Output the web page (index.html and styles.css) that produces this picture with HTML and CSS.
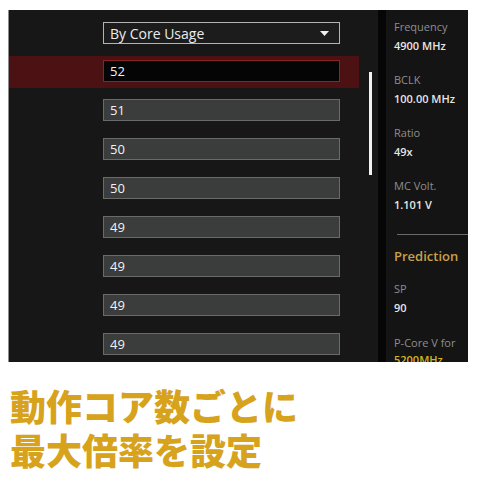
FILE: index.html
```html
<!DOCTYPE html>
<html lang="ja">
<head>
<meta charset="utf-8">
<title>By Core Usage</title>
<link rel="stylesheet" href="styles.css">
</head>
<body>
<div class="screen">
  <div class="main">
    <div class="select">
      <span>By Core Usage</span>
      <svg class="caret" width="9" height="5" viewBox="0 0 9 5"><path d="M0 0H9L4.5 5Z" fill="#f0f0f0"/></svg>
    </div>
    <div class="list">
      <div class="row active"><div class="field">52</div></div>
      <div class="row"><div class="field">51</div></div>
      <div class="row"><div class="field">50</div></div>
      <div class="row"><div class="field">50</div></div>
      <div class="row"><div class="field">49</div></div>
      <div class="row"><div class="field">49</div></div>
      <div class="row"><div class="field">49</div></div>
      <div class="row"><div class="field">49</div></div>
    </div>
    <div class="scrollbar"></div>
  </div>
  <div class="sep"></div>
  <div class="side">
    <div class="item"><div class="label">Frequency</div><div class="value">4900 MHz</div></div>
    <div class="item"><div class="label">BCLK</div><div class="value">100.00 MHz</div></div>
    <div class="item"><div class="label">Ratio</div><div class="value">49x</div></div>
    <div class="item"><div class="label">MC Volt.</div><div class="value">1.101 V</div></div>
    <div class="rule"></div>
    <div class="heading">Prediction</div>
    <div class="item sp"><div class="label">SP</div><div class="value">90</div></div>
    <div class="item pcore"><div class="label">P-Core V for</div><div class="value gold">5200MHz</div></div>
  </div>
</div>
<div class="caption">
  <div class="line">動作コア数ごとに</div>
  <div class="line">最大倍率を設定</div>
</div>
</body>
</html>
```

FILE: styles.css
```css
html, body {
  margin: 0;
  padding: 0;
  background: #ffffff;
}
body {
  width: 480px;
  height: 480px;
  overflow: hidden;
  font-family: "Open Sans", "Noto Sans", sans-serif;
}
.screen {
  margin: 10px 0 0 8px;
  width: 460px;
  height: 352px;
  display: flex;
  border-left: 1px solid #8c8c8c;
  box-sizing: border-box;
  overflow: hidden;
}
.main {
  position: relative;
  width: 369px;
  background: #171717;
  padding-top: 12px;
  box-sizing: border-box;
}
.select {
  margin-left: 94px;
  width: 237px;
  height: 22px;
  box-sizing: border-box;
  border: 1px solid #b4b4b4;
  background: #1c1c1c;
  display: flex;
  align-items: center;
  justify-content: space-between;
  padding: 0 10px 0 6px;
  color: #ececec;
  font-size: 14px;
}
.caret {
  display: block;
}
.list {
  margin-top: 12px;
  display: flex;
  flex-direction: column;
  gap: 7px;
}
.row {
  height: 32px;
  width: 350px;
  box-sizing: border-box;
  padding: 4px 19px 6px 94px;
}
.row.active {
  background: #4c1113;
}
.field {
  height: 22px;
  box-sizing: border-box;
  border: 1px solid #6a6a6a;
  background: #3b3c3c;
  color: #f2f2f2;
  font-size: 13px;
  line-height: 20px;
  padding-left: 6px;
}
.row.active .field {
  background: #050505;
  border-color: #8a2326;
}
.scrollbar {
  position: absolute;
  left: 360px;
  top: 62px;
  width: 3px;
  height: 103px;
  background: #f2f2f2;
}
.sep {
  width: 8px;
  background: #060606;
}
.side {
  flex: 1;
  background: #141414;
  padding: 7px 0 0 8px;
  display: flex;
  flex-direction: column;
}
.item {
  margin-bottom: 14px;
}
.label {
  color: #8e8e8e;
  font-size: 11px;
  line-height: 19px;
}
.value {
  color: #e6e6e6;
  font-size: 11px;
  font-weight: 600;
  line-height: 20px;
}
.value.gold {
  color: #d4b419;
}
.rule {
  margin-top: 5px;
  margin-left: 3px;
  height: 1px;
  flex: none;
  background: #6a6a6a;
}
.heading {
  margin-top: 12px;
  color: #c9a04c;
  font-size: 13px;
  font-weight: 600;
  line-height: 19px;
}
.item.sp {
  margin-top: 13px;
  margin-bottom: 15px;
}
.item.pcore .value {
  line-height: 16px;
}
.caption {
  margin-top: 21px;
  padding-left: 10px;
  color: #d7a21c;
  font-family: "Noto Sans CJK JP", "Noto Sans CJK SC", sans-serif;
  font-weight: 900;
  font-size: 36px;
  white-space: nowrap;
}
.line {
  height: 44px;
  line-height: 44px;
  overflow: visible;
}
```
